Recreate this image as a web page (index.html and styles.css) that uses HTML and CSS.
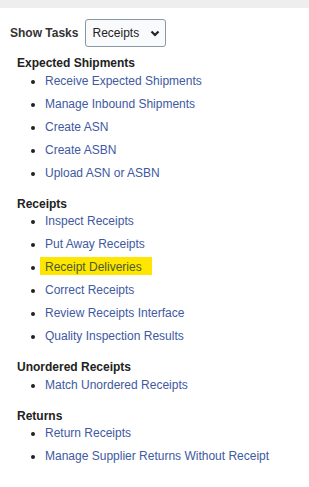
FILE: index.html
```html
<!DOCTYPE html>
<html>
<head>
	<meta charset="UTF-8" />
	<title>Receiving</title>
	<link rel="stylesheet" href="styles.css">
</head>
<body>

<div class="topbar"></div>

<div class="showtasks">
	<label for="selTasks">Show Tasks</label>
	<div class="selwrap">
		<select id="selTasks">
			<option>Receipts</option>
		</select>
		<svg class="chevron" width="10" height="7" viewBox="0 0 10 7">
			<path d="M1.5 1.5 L5 5 L8.5 1.5" fill="none" stroke="#222" stroke-width="2.2" />
		</svg>
	</div>
</div>

<div class="tasks">
	<h4>Expected Shipments</h4>
	<ul>
		<li><a href="#">Receive Expected Shipments</a></li>
		<li><a href="#">Manage Inbound Shipments</a></li>
		<li><a href="#">Create ASN</a></li>
		<li><a href="#">Create ASBN</a></li>
		<li><a href="#">Upload ASN or ASBN</a></li>
	</ul>

	<h4>Receipts</h4>
	<ul>
		<li><a href="#">Inspect Receipts</a></li>
		<li><a href="#">Put Away Receipts</a></li>
		<li><a href="#" class="mark">Receipt Deliveries</a></li>
		<li><a href="#">Correct Receipts</a></li>
		<li><a href="#">Review Receipts Interface</a></li>
		<li><a href="#">Quality Inspection Results</a></li>
	</ul>

	<h4>Unordered Receipts</h4>
	<ul>
		<li><a href="#">Match Unordered Receipts</a></li>
	</ul>

	<h4>Returns</h4>
	<ul>
		<li><a href="#">Return Receipts</a></li>
		<li><a href="#">Manage Supplier Returns Without Receipt</a></li>
	</ul>
</div>

</body>
</html>
```

FILE: styles.css
```css
body {
	margin: 0;
	background: #fff;
	font-family: "Liberation Sans", Arial, sans-serif;
	font-size: 12px;
	color: #222;
}
.topbar {
	height: 8px;
	background: #eeeeee;
}
.showtasks {
	display: flex;
	align-items: center;
	gap: 7px;
	padding: 11px 0 0 10px;
}
.showtasks label {
	font-weight: bold;
	color: #333;
}
.selwrap {
	position: relative;
}
.selwrap select {
	-webkit-appearance: none;
	appearance: none;
	width: 81px;
	height: 28px;
	margin: 0;
	padding: 0 0 0 6px;
	border: 1px solid #8a98a6;
	border-radius: 3px;
	background: #f9fafb;
	font-family: "Liberation Sans", Arial, sans-serif;
	font-size: 12px;
	color: #222;
	display: block;
}
.chevron {
	position: absolute;
	right: 6px;
	top: 11px;
	pointer-events: none;
}
.tasks {
	padding: 8px 0 0 17px;
}
.tasks h4 {
	margin: 0;
	font-size: 12px;
	line-height: 16px;
	color: #222;
}
.tasks ul {
	margin: 0 0 15px 0;
	padding: 1.5px 0 0 28px;
}
.tasks li {
	line-height: 16px;
	margin-bottom: 7px;
	color: #222;
}
.tasks li:last-child {
	margin-bottom: 0;
}
.tasks a {
	color: #4059a1;
	text-decoration: none;
}
.tasks a.mark {
	background: #ffe600;
	padding: 3px 10px 1px 5px;
	margin-left: -5px;
	color: #4a5a2a;
}
```
